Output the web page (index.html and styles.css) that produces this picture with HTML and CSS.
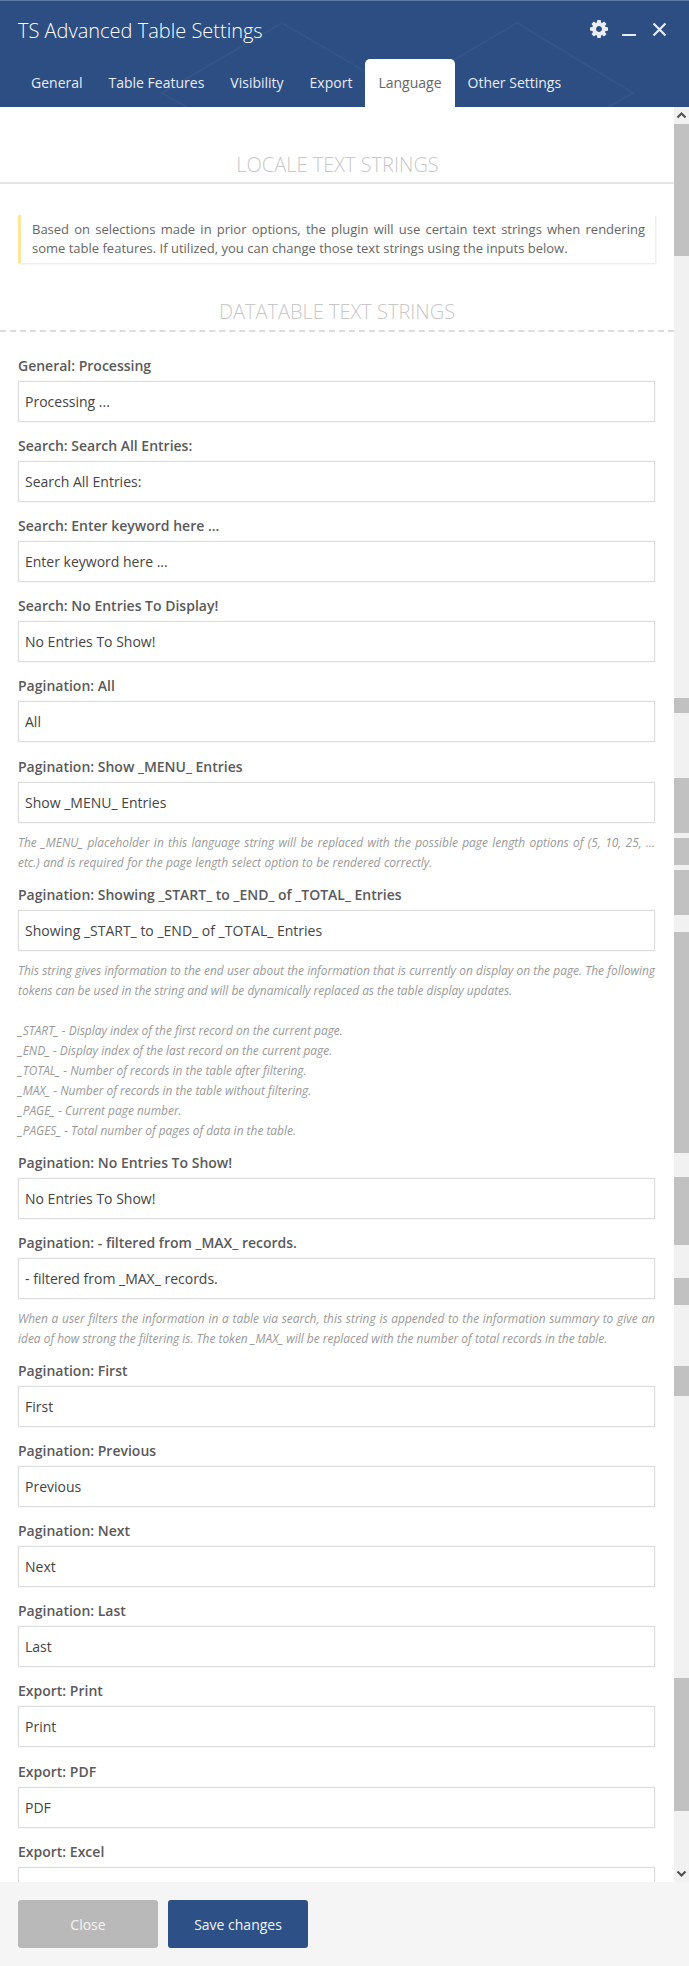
FILE: index.html
```html
<!DOCTYPE html>
<html lang="en">

<head>
    <title>TS Advanced Table Settings</title>
    <link rel="stylesheet" href="styles.css">
</head>

<body>

    <div class="modal">
        <!-- Header -->
        <div class="modal-header">
            <svg class="header-pattern" width="689" height="107" viewBox="0 0 689 107" fill="none">
                <path d="M187 107L162 93L282 23L402 93" />
                <path d="M397 93L517 23L633 93L608 107" />
            </svg>
            <div class="title-row">
                <h1>TS Advanced Table Settings</h1>
                <div class="window-icons">
                    <svg class="icon-gear" width="18" height="18" viewBox="0 0 1536 1536">
                        <path fill="#e9edf3" d="M1024 768q0-106-75-181t-181-75-181 75-75 181 75 181 181 75 181-75 75-181zm512-109v222q0 12-8 23t-20 13l-185 28q-19 54-39 91 35 50 107 138 10 12 10 25t-9 23q-27 37-99 108t-94 71q-12 0-26-9l-138-108q-44 23-91 38-16 136-29 186-7 28-36 28h-222q-14 0-24.500-8.500t-11.500-21.500l-28-184q-49-16-90-37l-141 107q-10 9-25 9-14 0-25-11-126-114-165-168-7-10-7-23 0-12 8-23 15-21 51-66.500t54-70.500q-27-50-41-99l-183-27q-13-2-21-12.500t-8-23.500v-222q0-12 8-23t19-13l186-28q14-46 39-92-40-57-107-138-10-12-10-24 0-10 9-23 26-36 98.500-107.500t94.500-71.500q13 0 26 10l138 107q44-23 91-38 16-136 29-186 7-28 36-28h222q14 0 24.500 8.500t11.500 21.500l28 184q49 16 90 37l142-107q9-9 24-9 13 0 25 10 129 119 165 170 7 8 7 22 0 12-8 23-15 21-51 66.500t-54 70.500q26 50 41 98l183 28q13 2 21 12.500t8 23.500z" />
                    </svg>
                    <span class="icon-minimize"></span>
                    <svg class="icon-close" width="15" height="15" viewBox="0 0 15 15">
                        <path d="M1.500 1.500L13.500 13.500M13.500 1.500L1.500 13.500" />
                    </svg>
                </div>
            </div>
            <div class="tabs">
                <a class="tab">General</a>
                <a class="tab">Table Features</a>
                <a class="tab">Visibility</a>
                <a class="tab">Export</a>
                <a class="tab active">Language</a>
                <a class="tab">Other Settings</a>
            </div>
        </div>

        <!-- Body -->
        <div class="modal-body">
            <div class="scroll-content">
                <h3 class="section-title">LOCALE TEXT STRINGS</h3>

                <div class="note">
                    Based on selections made in prior options, the plugin will use certain text strings when rendering some table features. If utilized, you can change those text strings using the inputs below.
                </div>

                <h3 class="section-title dashed">DATATABLE TEXT STRINGS</h3>

                <div class="field">
                    <label>General: Processing</label>
                    <input type="text" value="Processing ...">
                </div>
                <div class="field">
                    <label>Search: Search All Entries:</label>
                    <input type="text" value="Search All Entries:">
                </div>
                <div class="field">
                    <label>Search: Enter keyword here ...</label>
                    <input type="text" value="Enter keyword here ...">
                </div>
                <div class="field">
                    <label>Search: No Entries To Display!</label>
                    <input type="text" value="No Entries To Show!">
                </div>
                <div class="field">
                    <label>Pagination: All</label>
                    <input type="text" value="All">
                </div>
                <div class="field">
                    <label>Pagination: Show _MENU_ Entries</label>
                    <input type="text" value="Show _MENU_ Entries">
                    <p class="help help-menu">The _MENU_ placeholder in this language string will be replaced with the possible page length options of (5, 10, 25, ... etc.) and is required for the page length select option to be rendered correctly.</p>
                </div>
                <div class="field">
                    <label>Pagination: Showing _START_ to _END_ of _TOTAL_ Entries</label>
                    <input type="text" value="Showing _START_ to _END_ of _TOTAL_ Entries">
                    <p class="help">This string gives information to the end user about the information that is currently on display on the page. The following tokens can be used in the string and will be dynamically replaced as the table display updates.<br><br>
                        _START_ - Display index of the first record on the current page.<br>
                        _END_ - Display index of the last record on the current page.<br>
                        _TOTAL_ - Number of records in the table after filtering.<br>
                        _MAX_ - Number of records in the table without filtering.<br>
                        _PAGE_ - Current page number.<br>
                        _PAGES_ - Total number of pages of data in the table.</p>
                </div>
                <div class="field">
                    <label>Pagination: No Entries To Show!</label>
                    <input type="text" value="No Entries To Show!">
                </div>
                <div class="field">
                    <label>Pagination: - filtered from _MAX_ records.</label>
                    <input type="text" value="- filtered from _MAX_ records.">
                    <p class="help">When a user filters the information in a table via search, this string is appended to the information summary to give an idea of how strong the filtering is. The token _MAX_ will be replaced with the number of total records in the table.</p>
                </div>
                <div class="field">
                    <label>Pagination: First</label>
                    <input type="text" value="First">
                </div>
                <div class="field">
                    <label>Pagination: Previous</label>
                    <input type="text" value="Previous">
                </div>
                <div class="field">
                    <label>Pagination: Next</label>
                    <input type="text" value="Next">
                </div>
                <div class="field">
                    <label>Pagination: Last</label>
                    <input type="text" value="Last">
                </div>
                <div class="field">
                    <label>Export: Print</label>
                    <input type="text" value="Print">
                </div>
                <div class="field">
                    <label>Export: PDF</label>
                    <input type="text" value="PDF">
                </div>
                <div class="field">
                    <label>Export: Excel</label>
                    <input type="text" value="Excel">
                </div>
            </div>

            <!-- Scrollbar -->
            <div class="scrollbar">
                <svg class="arrow-up" width="15" height="17" viewBox="0 0 15 17">
                    <path d="M3.500 10.500L7.500 6.500L11.500 10.500" />
                </svg>
                <svg class="arrow-down" width="15" height="17" viewBox="0 0 15 17">
                    <path d="M3.500 6.500L7.500 10.500L11.500 6.500" />
                </svg>
            </div>
        </div>

        <!-- Footer -->
        <div class="modal-footer">
            <button class="btn-close">Close</button>
            <button class="btn-save">Save changes</button>
        </div>
    </div>

</body>

</html>
```
FILE: styles.css
```css
/* Base Reset */
* {
    box-sizing: border-box;
    margin: 0;
    padding: 0;
}

body {
    font-family: 'Open Sans', sans-serif;
    background-color: #fff;
    overflow: hidden;
}

.modal {
    display: flex;
    flex-direction: column;
    height: 1966px;
}

/* Header */
.modal-header {
    position: relative;
    flex: 0 0 107px;
    background-color: #2c4e83;
    border-top: 1px solid #5d78a3;
}

.header-pattern {
    position: absolute;
    top: -1px;
    left: 0;
}

.header-pattern path {
    stroke: rgba(255, 255, 255, 0.04);
    stroke-width: 2;
}

.title-row {
    position: relative;
    display: flex;
    justify-content: space-between;
    align-items: center;
    height: 58px;
    padding: 0 22px 0 18px;
}

.title-row h1 {
    font-size: 20px;
    font-weight: 300;
    color: #fff;
}

.window-icons {
    display: flex;
    align-items: center;
    margin-top: -2px;
}

.icon-minimize {
    width: 14px;
    height: 2px;
    margin: 12px 16px 0 14px;
    background-color: #e9edf3;
}

.icon-close path {
    stroke: #e9edf3;
    stroke-width: 2.2;
    fill: none;
}

/* Tabs */
.tabs {
    position: relative;
    display: flex;
    padding-left: 18px;
}

.tab {
    height: 48px;
    padding: 0 13px;
    font-size: 14px;
    line-height: 48px;
    color: #e8ecf3;
}

.tab.active {
    background-color: #fff;
    border-radius: 5px 5px 0 0;
    color: #666;
}

/* Body */
.modal-body {
    flex: 1;
    display: flex;
    overflow: hidden;
}

.scroll-content {
    flex: 0 0 674px;
    padding: 0 0 0 18px;
    overflow: hidden;
}

.section-title {
    margin: 46px -1px 0 -18px;
    padding-bottom: 5px;
    border-bottom: 2px solid #e5e5e5;
    font-size: 20px;
    font-weight: 300;
    line-height: 24px;
    text-align: center;
    color: #c8c8c8;
}

.section-title.dashed {
    margin: 37px 0 24px -18px;
    padding-bottom: 6px;
    border-bottom: 2px dashed #dcdcdc;
}

/* Note */
.note {
    width: 637px;
    height: 48px;
    margin-top: 31px;
    padding: 5px 10px 0 11px;
    background-color: #fff;
    border-left: 3px solid #fbe69c;
    box-shadow: 1px 1px 2px rgba(0, 0, 0, 0.1);
    font-size: 13px;
    line-height: 19px;
    text-align: justify;
    color: #666;
}

/* Fields */
.field {
    width: 637px;
    padding-bottom: 13.12px;
}

.field label {
    display: block;
    margin-bottom: 5px;
    font-size: 14px;
    font-weight: 600;
    line-height: 20px;
    color: #5a5a5a;
}

.field input {
    display: block;
    width: 100%;
    height: 41px;
    margin-bottom: 1px;
    padding: 0 6px;
    border: 1px solid #ddd;
    box-shadow: 0 0 1px #ddd;
    font-family: 'Open Sans', sans-serif;
    font-size: 14px;
    color: #444;
}

.help {
    margin-top: 9px;
    font-size: 11.93px;
    font-style: italic;
    line-height: 20px;
    text-align: justify;
    color: #999;
}

/* pushes "etc.)" to the second line */
.help-menu {
    word-spacing: 0.4px;
}

/* Scrollbar */
.scrollbar {
    position: relative;
    flex: 0 0 15px;
    background: linear-gradient(to bottom,
            #f1f1f1 0 17px,
            #c1c1c1 17px 149px,
            #f1f1f1 149px 591px,
            #c1c1c1 591px 606px,
            #f1f1f1 606px 671px,
            #c1c1c1 671px 726px,
            #f1f1f1 726px 731px,
            #c1c1c1 731px 758px,
            #f1f1f1 758px 763px,
            #c1c1c1 763px 808px,
            #f1f1f1 808px 825px,
            #c1c1c1 825px 1046px,
            #f1f1f1 1046px 1070px,
            #c1c1c1 1070px 1138px,
            #f1f1f1 1138px 1171px,
            #c1c1c1 1171px 1198px,
            #f1f1f1 1198px 1259px,
            #c1c1c1 1259px 1289px,
            #f1f1f1 1289px 1571px,
            #c1c1c1 1571px 1704px,
            #f1f1f1 1704px);
}

.scrollbar svg {
    position: absolute;
    left: 0;
}

.scrollbar path {
    stroke: #505050;
    stroke-width: 2;
    fill: none;
}

.arrow-up {
    top: 0;
}

.arrow-down {
    bottom: 0;
}

/* Footer */
.modal-footer {
    flex: 0 0 83px;
    display: flex;
    gap: 10px;
    padding: 18px;
    background-color: #f5f5f5;
}

.modal-footer button {
    width: 140px;
    height: 48px;
    border: none;
    border-radius: 3px;
    font-family: 'Open Sans', sans-serif;
    font-size: 14px;
}

.btn-close {
    background-color: #b9b9b9;
    color: #f5f5f5;
}

.btn-save {
    background-color: #2d5087;
    color: #f2f4f8;
}
```
